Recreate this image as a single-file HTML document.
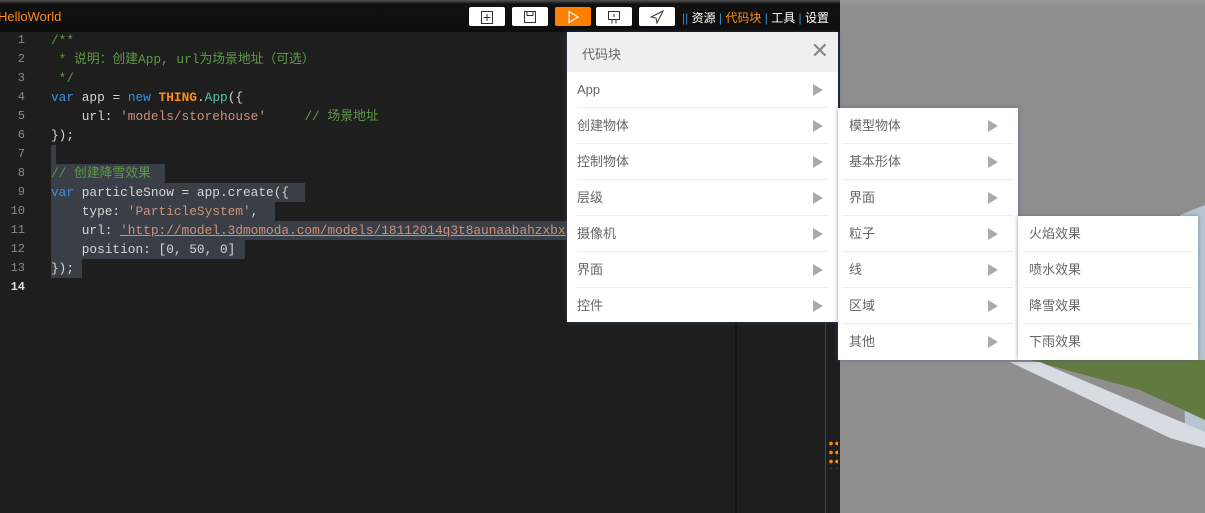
<!DOCTYPE html>
<html><head><meta charset="utf-8"><style>
*{margin:0;padding:0;box-sizing:border-box}
body{width:1205px;height:513px;overflow:hidden;background:#1e1e1e;position:relative;font-family:"Liberation Sans","Noto Sans CJK SC",sans-serif}
.top{position:absolute;left:0;top:0;width:840px;height:32px;background:linear-gradient(#555 0,#111 4px,#0d0d0d 100%)}
.title{position:absolute;left:-2px;top:9px;color:#ff8a1a;font-size:13px}
.btn{position:absolute;top:7px;width:36px;height:19px;background:#fff;border-radius:2px}
.btn.o{background:#ff7f00}
.btn svg{position:absolute;left:11px;top:3px}
.nav{position:absolute;left:682px;top:9px;font-size:12px;color:#fff;white-space:pre}
.nav .s{color:#3b8fd8}.nav .a{color:#ff8a1a}
.right{position:absolute;left:840px;top:0;width:365px;height:513px;background:linear-gradient(#999 0,#8e8e8e 8px,#8f8f8f 100%)}
.code{position:absolute;left:0;top:31px;font-family:"Liberation Mono","Noto Sans CJK SC",monospace;font-size:12.8px;line-height:19px}
.ln{position:absolute;left:0;width:25px;text-align:right;color:#8a8a8a;font-size:12px}
.cl{position:absolute;left:51px;white-space:pre;color:#d4d4d4}
.c{color:#5e9a46}.k{color:#3e8fd6}.s1{color:#ce9178}.t{color:#ff8a1a;font-weight:bold}.f{color:#4ec9b0}
.sel{position:absolute;background:#3a3f47}
.menu{position:absolute;background:#fff;box-shadow:0 0 4px rgba(60,90,130,.6)}
.hd{height:40px;background:#efefef;color:#666;font-size:13px;padding:12px 15px}
.it{height:36px;margin:0 10px;border-bottom:1px solid #ececec;font-size:13px;color:#666;line-height:36px;position:relative}
.it .ar{position:absolute;right:5px;top:12px;width:0;height:0;border-left:10px solid #aaa;border-top:6px solid transparent;border-bottom:6px solid transparent}
.m2 .it{margin:0 5px;padding-left:6px}
.m2 .it .ar{right:15px}
</style></head><body>
<div class="top">
<div class="title">HelloWorld</div>
<div class="btn" style="left:469px"><svg width="14" height="14"><rect x="1.5" y="1.5" width="11" height="12" fill="none" stroke="#333"/><path d="M7 4v7M3.5 7.5h7" stroke="#333"/></svg></div>
<div class="btn" style="left:512px"><svg width="14" height="14"><rect x="1.5" y="1.5" width="11" height="11" fill="none" stroke="#333"/><path d="M4 1.5v4h6v-4" fill="none" stroke="#333"/></svg></div>
<div class="btn o" style="left:555px"><svg width="14" height="14"><path d="M3 1.5l9 5.5-9 5.5z" fill="none" stroke="#fff" stroke-width="1.2"/></svg></div>
<div class="btn" style="left:596px"><svg width="14" height="14"><rect x="1.5" y="1.5" width="11" height="8" fill="none" stroke="#333"/><path d="M5 9.5v4M9 9.5v4M7 4v3" stroke="#333"/></svg></div>
<div class="btn" style="left:639px"><svg width="14" height="14"><path d="M13 1L1 7l5 1 1 5z" fill="none" stroke="#333"/></svg></div>
<div class="nav"><span class="s">||</span> 资源 <span class="s">|</span> <span class="a">代码块</span> <span class="s">|</span> 工具 <span class="s">|</span> 设置</div>
</div>
<div style="position:absolute;left:735px;top:32px;width:2px;height:481px;background:#151515"></div>
<div style="position:absolute;left:825px;top:32px;width:1px;height:481px;background:#444"></div>
<div style="position:absolute;left:828px;top:439px;width:10px;height:30px;background:radial-gradient(circle,#ff8a00 1.6px,transparent 2px) 0 0/6px 9px"></div>
<div class="right">
<svg width="365" height="513" style="position:absolute;left:0;top:0">
<polygon points="340,215 365,205 365,440 345,430" fill="#b8c4cf"/>
<polygon points="190,360 365,360 365,420 300,390" fill="#62793f"/>
<polygon points="170,362 200,362 365,432 365,448 330,438" fill="#d7dbe2"/>
</svg>
</div>
<div class="sel" style="left:51px;top:145px;width:5px;height:19px"></div>
<div class="sel" style="left:51px;top:164px;width:114px;height:19px"></div>
<div class="sel" style="left:51px;top:183px;width:254px;height:19px"></div>
<div class="sel" style="left:51px;top:202px;width:224px;height:19px"></div>
<div class="sel" style="left:51px;top:221px;width:516px;height:19px"></div>
<div class="sel" style="left:51px;top:240px;width:194px;height:19px"></div>
<div class="sel" style="left:51px;top:259px;width:31px;height:19px"></div>
<div class="code">
<div class="ln" style="top:0">1</div><div class="ln" style="top:19px">2</div><div class="ln" style="top:38px">3</div><div class="ln" style="top:57px">4</div><div class="ln" style="top:76px">5</div><div class="ln" style="top:95px">6</div><div class="ln" style="top:114px">7</div><div class="ln" style="top:133px">8</div><div class="ln" style="top:152px">9</div><div class="ln" style="top:171px">10</div><div class="ln" style="top:190px">11</div><div class="ln" style="top:209px">12</div><div class="ln" style="top:228px">13</div><div class="ln" style="top:247px;color:#ddd;font-weight:bold">14</div>
<div class="cl c" style="top:0">/**</div>
<div class="cl c" style="top:19px"> * 说明：创建App, url为场景地址（可选）</div>
<div class="cl c" style="top:38px"> */</div>
<div class="cl" style="top:57px"><span class="k">var</span> app = <span class="k">new</span> <span class="t">THING</span>.<span class="f">App</span>({</div>
<div class="cl" style="top:76px">    url: <span class="s1">'models/storehouse'</span>     <span class="c">// 场景地址</span></div>
<div class="cl" style="top:95px">});</div>
<div class="cl c" style="top:133px">// 创建降雪效果</div>
<div class="cl" style="top:152px"><span class="k">var</span> particleSnow = app.create({</div>
<div class="cl" style="top:171px">    type: <span class="s1">'ParticleSystem'</span>,</div>
<div class="cl" style="top:190px">    url: <span class="s1" style="text-decoration:underline">'http://model.3dmomoda.com/models/18112014q3t8aunaabahzxbx</span></div>
<div class="cl" style="top:209px">    position: [0, 50, 0]</div>
<div class="cl" style="top:228px">});</div>
</div>
<div class="menu" style="left:567px;top:32px;width:271px;height:290px">
<div class="hd">代码块<span style="position:absolute;right:9px;top:6px;font-size:22px;color:#888">✕</span></div>
<div class="it">App<i class="ar"></i></div>
<div class="it">创建物体<i class="ar"></i></div>
<div class="it">控制物体<i class="ar"></i></div>
<div class="it">层级<i class="ar"></i></div>
<div class="it">摄像机<i class="ar"></i></div>
<div class="it">界面<i class="ar"></i></div>
<div class="it" style="border:0">控件<i class="ar"></i></div>
</div>
<div class="menu m2" style="left:838px;top:108px;width:180px;height:252px">
<div class="it">模型物体<i class="ar"></i></div>
<div class="it">基本形体<i class="ar"></i></div>
<div class="it">界面<i class="ar"></i></div>
<div class="it">粒子<i class="ar"></i></div>
<div class="it">线<i class="ar"></i></div>
<div class="it">区域<i class="ar"></i></div>
<div class="it" style="border:0">其他<i class="ar"></i></div>
</div>
<div class="menu m2" style="left:1018px;top:216px;width:180px;height:144px">
<div class="it">火焰效果</div>
<div class="it">喷水效果</div>
<div class="it">降雪效果</div>
<div class="it" style="border:0">下雨效果</div>
</div>
</body></html>
